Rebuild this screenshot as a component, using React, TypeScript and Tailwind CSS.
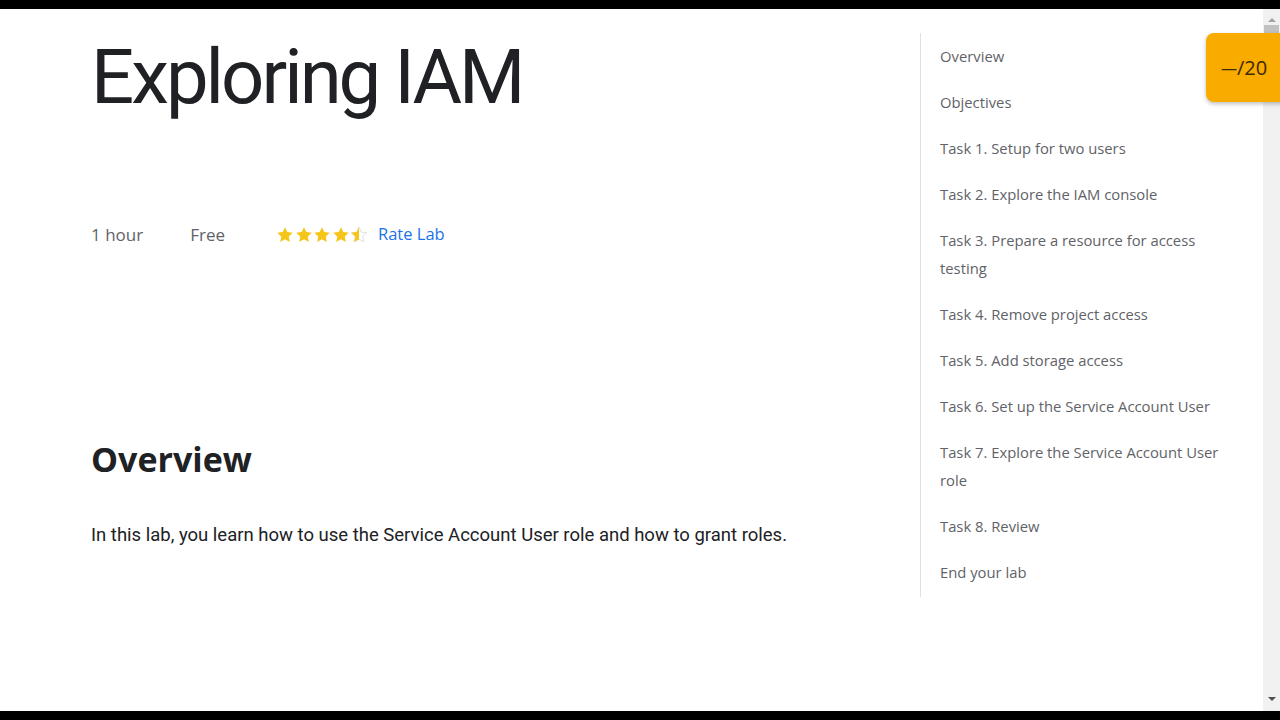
import React from "react";

const items: string[] = [
  "Overview",
  "Objectives",
  "Task 1. Setup for two users",
  "Task 2. Explore the IAM console",
  "Task 3. Prepare a resource for access testing",
  "Task 4. Remove project access",
  "Task 5. Add storage access",
  "Task 6. Set up the Service Account User",
  "Task 7. Explore the Service Account User role",
  "Task 8. Review",
  "End your lab",
];

function Star({ fill }: { fill: "full" | "half" }) {
  const d =
    "M12 1.5l3.1 6.6 7.2.9-5.3 5 1.4 7.2L12 17.6l-6.4 3.6 1.4-7.2-5.3-5 7.2-.9z";
  return (
    <svg width="18" height="18" viewBox="0 0 24 24">
      {fill === "full" ? (
        <path d={d} fill="#f5c518" />
      ) : (
        <>
          <defs>
            <clipPath id="halfclip">
              <rect x="0" y="0" width="12" height="24" />
            </clipPath>
          </defs>
          <path d={d} fill="none" stroke="#dadce0" strokeWidth="1.2" />
          <path d={d} fill="#f5c518" clipPath="url(#halfclip)" />
        </>
      )}
    </svg>
  );
}

export default function App() {
  return (
    <div className="w-[1280px] h-[720px] bg-black flex flex-col overflow-hidden relative">
      <div className="h-[9px] shrink-0" />
      <div className="flex-1 flex bg-white min-h-0">
        <div className="flex-1 flex min-w-0">
          <main className="w-[920px] shrink-0 pl-[91px] pt-[28px]" style={{ fontFamily: "'Open Sans', sans-serif" }}>
            <h1 className="text-[76px] leading-[80px] text-[#202124] tracking-[-3px]" style={{ fontFamily: "Roboto, sans-serif" }}>
              Exploring IAM
            </h1>
            <div className="mt-[105px] flex items-center text-[17px] text-[#5f6368]">
              <span>1 hour</span>
              <span className="ml-[47px]">Free</span>
              <span className="ml-[51px] flex items-center gap-[0.5px]">
                <Star fill="full" />
                <Star fill="full" />
                <Star fill="full" />
                <Star fill="full" />
                <Star fill="half" />
              </span>
              <span className="ml-[10px] text-[#1a73e8] text-[16.5px] font-medium">Rate Lab</span>
            </div>
            <h2 className="mt-[191px] text-[34px] leading-[40px] font-bold text-[#202124]">Overview</h2>
            <p className="mt-[43px] text-[18.5px] text-[#202124]" style={{ fontFamily: "Roboto, sans-serif" }}>
              In this lab, you learn how to use the Service Account User role and how to grant roles.
            </p>
          </main>
          <aside className="mt-[24px] h-[564px] border-l border-[#e0e0e0] pl-[19px] pt-[9px]" style={{ fontFamily: "'Open Sans', sans-serif" }}>
            <ul className="flex flex-col gap-[18px] w-[290px]">
              {items.map((t) => (
                <li key={t} className="text-[14.8px] leading-[28px] text-[#5f6368]">
                  {t}
                </li>
              ))}
            </ul>
          </aside>
        </div>
        <div className="w-[17px] shrink-0 bg-[#f1f1f1] flex flex-col items-center">
          <div className="h-[13px] flex items-end justify-center">
            <div className="w-0 h-0 border-l-[4px] border-r-[4px] border-b-[4px] border-l-transparent border-r-transparent border-b-[#a3a3a3]" />
          </div>
          <div className="mt-[3px] w-[15px] h-[70px] bg-[#c1c1c1]" />
          <div className="flex-1" />
          <div className="h-[14px] flex items-start justify-center">
            <div className="w-0 h-0 border-l-[4px] border-r-[4px] border-t-[4px] border-l-transparent border-r-transparent border-t-[#505050]" />
          </div>
        </div>
      </div>
      <div className="h-[9px] shrink-0" />
      <div
        className="absolute left-[1206px] top-[33px] w-[80px] h-[69px] rounded-l-[8px] bg-[#f9ab00] flex items-center pl-[15px] text-[20px] text-[#3c2a00] shadow-[0_2px_4px_rgba(0,0,0,0.25)]"
        style={{ fontFamily: "'Open Sans', sans-serif" }}
      >
        <span className="text-[16px]">—</span>/20
      </div>
    </div>
  );
}
